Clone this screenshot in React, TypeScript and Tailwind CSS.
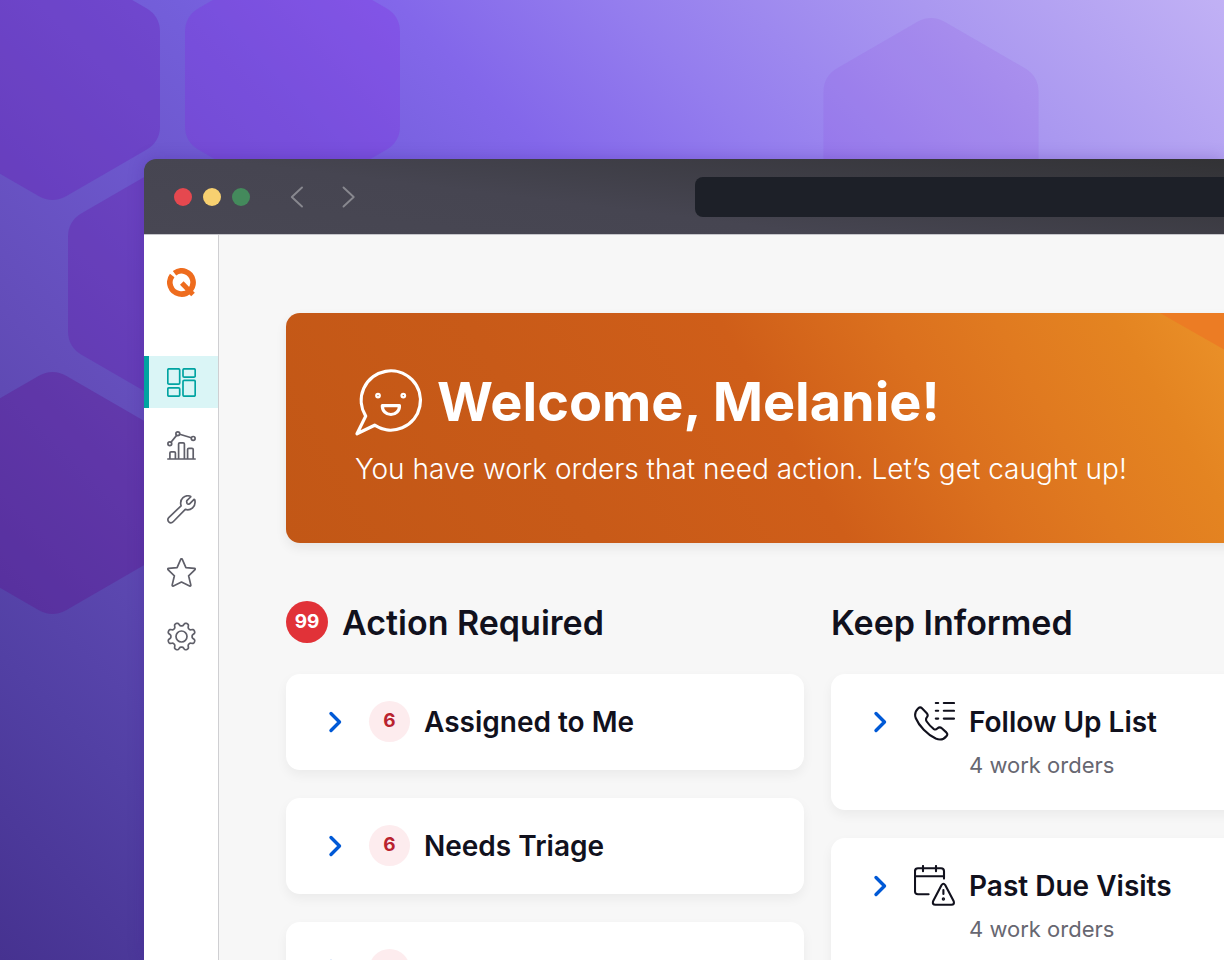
import React from "react";

interface WorkItem {
  id: number,
  title?: string,
  count?: number,
  note?: string,
  icon?: React.ReactNode,
}

// outline of the settings cog, eight soft teeth around (14.5, 14.5)
const cogPath =
  "M" +
  Array.from({ length: 144 }, (_, i) => {
    const a = (i / 144) * Math.PI * 2;
    const r = 12.3 - (1.7 * Math.tanh(1.9 * Math.cos(8 * a))) / Math.tanh(1.9);
    return `${(14.5 + r * Math.cos(a)).toFixed(2)} ${(14.5 + r * Math.sin(a)).toFixed(2)}`;
  }).join("L") +
  "Z";

const hexPath =
  "M-14 -117 Q0 -125 14 -117 L93.5 -71 Q107.5 -63 107.5 -47 V47 Q107.5 63 93.5 71 L14 117 Q0 125 -14 117 L-93.5 71 Q-107.5 63 -107.5 47 V-47 Q-107.5 -63 -93.5 -71Z";

const Backdrop = () => (
  <svg className="absolute inset-0 h-full w-full" aria-hidden="true">
    <path d={hexPath} transform="translate(52.5 79)" fill="#6810b4" fillOpacity="0.28" />
    <path d={hexPath} transform="translate(292.5 79)" fill="#8424e0" fillOpacity="0.26" />
    <path d={hexPath} transform="translate(175.5 284)" fill="#6410a4" fillOpacity="0.28" />
    <path d={hexPath} transform="translate(52.5 493)" fill="#5c0c8c" fillOpacity="0.32" />
    <path d={hexPath} transform="translate(931 139)" fill="#8a2cd8" fillOpacity="0.11" />
  </svg>
);

const Logo = () => (
  <svg width="29" height="29" viewBox="0 0 29 29" fill="none" stroke="#ee6c1e" aria-label="Q" role="img">
    <path d="M7.5 5.2A11.6 11.6 0 1 1 5.2 7.5" strokeWidth="5.6" />
    <path d="M14.8 15L26 26.6" strokeWidth="5" />
  </svg>
);

const DashboardIcon = () => (
  <svg width="29" height="29" viewBox="0 0 29 29" fill="none" stroke="currentColor" strokeWidth="1.7">
    <rect x="0.8" y="0.8" width="11.9" height="15.4" rx="1.2" />
    <rect x="16" y="0.8" width="12.2" height="8.3" rx="1.2" />
    <rect x="0.8" y="19.9" width="11.9" height="8.3" rx="1.2" />
    <rect x="16" y="12.4" width="12.2" height="15.8" rx="1.2" />
  </svg>
);

const ChartIcon = () => (
  <svg width="29" height="29" viewBox="0 0 29 29" fill="none" stroke="currentColor" strokeWidth="1.7" strokeLinecap="round" strokeLinejoin="round">
    <circle cx="2.8" cy="12.8" r="1.9" />
    <circle cx="10.8" cy="2.8" r="1.9" />
    <circle cx="26.2" cy="7.4" r="1.9" />
    <path d="M4 11.2L9.6 4.4M12.7 3.3L24.3 6.8M0.8 28H28.2M2.9 28V22Q2.9 20.8 4.1 20.8H7.2Q8.4 20.8 8.4 22V28M11.6 28V13Q11.6 11.8 12.8 11.8H16.2Q17.4 11.8 17.4 13V28M20.6 28V18.6Q20.6 17.4 21.8 17.4H25Q26.2 17.4 26.2 18.6V28" />
  </svg>
);

const WrenchIcon = () => (
  <svg width="29" height="29" viewBox="0 0 29 29" fill="none" stroke="currentColor" strokeWidth="1.7" strokeLinecap="round" strokeLinejoin="round">
    <path d="M23.6 2L20.1 5.4Q19.5 6 19.7 6.9L20 8.3Q20.3 9.1 21.1 9.1L22.6 8.8L26.8 4.6Q27.5 4.2 27.8 5C28.5 8 27.8 10.8 25.6 12.8C23.5 14.7 20.6 15.2 18.3 14.4L6.4 26.5C4.9 28 3 28 1.8 26.9C0.5 25.6 0.5 23.7 2 22.3L14.1 10.8C13.2 7.8 13.8 4.7 16 2.7C18.2 0.8 21 0.4 23.3 1.2Q24 1.5 23.6 2Z" />
  </svg>
);

const StarIcon = () => (
  <svg width="29" height="29" viewBox="0 0 29 29" fill="none" stroke="currentColor" strokeWidth="1.7" strokeLinejoin="round">
    <path d="M13.7 1.4Q14.5 0 15.3 1.4L18.9 9.6L27.5 10.4Q28.9 10.7 27.8 11.8L21.6 17.8L23.8 26.9Q24 28.5 22.6 27.9L14.5 24L6.4 27.9Q5 28.5 5.2 26.9L7.4 17.8L1.2 11.8Q0.1 10.7 1.5 10.4L10.1 9.6Z" />
  </svg>
);

const SettingsIcon = () => (
  <svg width="29" height="29" viewBox="0 0 29 29" fill="none" stroke="currentColor" strokeWidth="1.7" strokeLinejoin="round">
    <path d={cogPath} />
    <circle cx="14.5" cy="14.5" r="5.5" />
  </svg>
);

const SmileIcon = () => (
  <svg width="68" height="68" viewBox="0 0 68 68" fill="none" stroke="currentColor" strokeWidth="3.2" strokeLinecap="round" strokeLinejoin="round" aria-hidden="true">
    <path d="M10.7 48.1A29.6 29.6 0 1 1 19.6 57.2L2 65.8Z" />
    <circle cx="23" cy="27.6" r="1.8" strokeWidth="2.2" />
    <circle cx="48.3" cy="27.6" r="1.8" strokeWidth="2.2" />
    <path d="M27.3 37.7H44.5C44.5 43 40.6 46.5 35.9 46.5S27.3 43 27.3 37.7Z" />
  </svg>
);

const PhoneListIcon = () => (
  <svg width="41" height="41" viewBox="0 0 41 41" fill="none" stroke="currentColor" strokeWidth="2.1" strokeLinecap="round" strokeLinejoin="round" aria-hidden="true">
    <path d="M8 7.2L12.8 12.2C14.2 13.8 14 15 12.8 16.4C11.6 17.9 11.7 19 12.7 20.5C14.8 23.6 17.3 26.2 19.9 28.1C21.2 28.9 22.1 28.7 23.3 27.6C24.8 26.2 26.3 26 27.8 27.3L32.3 31.4C33.5 32.6 33.6 33.8 32.6 35C29.5 38.9 25.5 39.2 21.7 37.5C13.2 33.4 5 25 1.7 17C0.1 12.6 1.4 10 4.3 7.2C5.5 6.1 6.9 6.1 8 7.2Z" />
    <path d="M21.8 2H24.2M29.8 2H40M21.8 9.8H24.2M29.8 9.8H40M21.8 17.6H24.2M29.8 17.6H40" />
  </svg>
);

const CalendarAlertIcon = () => (
  <svg width="41" height="41" viewBox="0 0 41 41" fill="none" stroke="currentColor" strokeWidth="2.1" strokeLinecap="round" strokeLinejoin="round" aria-hidden="true">
    <path d="M14.6 29.2H4Q1 29.2 1 26.2V6.2Q1 3.2 4 3.2H27Q30 3.2 30 6.2V13.6M1 11.2H30M9 1V6.2M22 1V6.2" />
    <path d="M27.6 20Q29.4 17.4 31.2 20L39.6 36Q40.8 39.8 37.4 39.8H21.4Q18 39.8 19.2 36ZM29.4 25V29" />
    <circle cx="29.4" cy="34" r="1" strokeWidth="1.4" />
  </svg>
);

const Chevron = () => (
  <svg className="shrink-0" width="14" height="22" viewBox="0 0 14 22" fill="none" stroke="#0059d6" strokeWidth="3.4" strokeLinecap="round" strokeLinejoin="round" aria-hidden="true">
    <path d="M3 2.5L11.5 11L3 19.5" />
  </svg>
);

const navItems = [
  { name: "Dashboard", icon: <DashboardIcon />, active: true },
  { name: "Reports", icon: <ChartIcon />, active: false },
  { name: "Maintenance", icon: <WrenchIcon />, active: false },
  { name: "Favorites", icon: <StarIcon />, active: false },
  { name: "Settings", icon: <SettingsIcon />, active: false },
];

const actionItems: WorkItem[] = [
  { id: 1, title: "Assigned to Me", count: 6 },
  { id: 2, title: "Needs Triage", count: 6 },
  { id: 3 },
];

const informedItems: WorkItem[] = [
  { id: 1, title: "Follow Up List", note: "4 work orders", icon: <PhoneListIcon /> },
  { id: 2, title: "Past Due Visits", note: "4 work orders", icon: <CalendarAlertIcon /> },
];

const TitleBar = () => (
  <header className="flex h-[76px] shrink-0 items-center border-b border-[#c6c6cb] bg-[linear-gradient(7deg,#484753_0%,#464551_40%,#323235_100%)] pl-[30px]">
    <div className="flex gap-[11px]">
      <button aria-label="Close" className="size-[18px] rounded-full bg-[#e5484f]" />
      <button aria-label="Minimize" className="size-[18px] rounded-full bg-[#f7d070]" />
      <button aria-label="Maximize" className="size-[18px] rounded-full bg-[#448a5c]" />
    </div>
    <div className="ml-10 flex gap-[38px] text-[#88888f]">
      <button aria-label="Back">
        <svg width="14" height="22" viewBox="0 0 14 22" fill="none" stroke="currentColor" strokeWidth="1.9" strokeLinecap="round" strokeLinejoin="round">
          <path d="M12 1.5L1.8 11L12 20.5" />
        </svg>
      </button>
      <button aria-label="Forward">
        <svg width="14" height="22" viewBox="0 0 14 22" fill="none" stroke="currentColor" strokeWidth="1.9" strokeLinecap="round" strokeLinejoin="round">
          <path d="M1.5 1.5L11.7 11L1.5 20.5" />
        </svg>
      </button>
    </div>
    <input
      aria-label="Address"
      className="-mr-4 ml-[339px] h-10 min-w-0 flex-1 rounded-lg bg-[#1d2028] px-4 text-white outline-none"
    />
  </header>
);

const SideNav = () => (
  <nav className="flex w-[75px] shrink-0 flex-col border-r border-[#cfcfd2] bg-white pt-[33px]">
    <a href="#home" className="flex justify-center pl-px">
      <Logo />
    </a>
    <ul className="mt-[59px] flex h-[306px] flex-col justify-between">
      {navItems.map((item) => (
        <li key={item.name}>
          <a
            href="#nav"
            aria-label={item.name}
            className={
              item.active
                ? "flex h-[52px] items-center justify-center border-l-[5px] border-[#00a3a1] bg-[#daf5f6] pr-[5px] text-[#00a3a1]"
                : "flex h-[52px] items-center justify-center text-[#5f5f69]"
            }
          >
            {item.icon}
          </a>
        </li>
      ))}
    </ul>
  </nav>
);

const WorkCard: React.FC<{ item: WorkItem }> = ({ item }) => (
  <li className="rounded-[14px] bg-white px-[42px] pb-7 pt-[27px] shadow-[0_5px_12px_rgba(0,0,0,0.05)]">
    <button className="flex h-[41px] w-full items-center text-left">
      <Chevron />
      <span className="ml-[27px] flex w-[41px] shrink-0 justify-center text-[#11111d]">
        {item.icon ?? (
          <span className="flex size-[41px] items-center justify-center rounded-full bg-[#fdecee] text-[19px] font-bold text-[#b9232f]">
            {item.count}
          </span>
        )}
      </span>
      <span className="ml-3.5 text-[28px] font-semibold text-[#11111d]">{item.title}</span>
    </button>
    {item.note && <p className="ml-24 mt-1.5 text-[22px] leading-[34px] text-[#676771]">{item.note}</p>}
  </li>
);

const App = () => {
  return (
    <div className="relative flex h-screen overflow-hidden bg-[linear-gradient(45deg,#463290_0%,#5240a4_14%,#634db9_30%,#745fdb_52%,#8367ea_62%,#947dee_72%,#aa98f0_86%,#c1b1f5_100%)] pl-36 pt-[159px] font-[Inter,sans-serif]">
      <Backdrop />
      <div className="relative flex min-w-0 flex-1 flex-col rounded-tl-xl shadow-[0_0_16px_rgba(60,20,140,0.25)]">
        <div className="flex min-h-0 flex-1 flex-col overflow-hidden rounded-tl-xl">
          <TitleBar />
          <div className="flex min-h-0 flex-1">
            <SideNav />
            <main className="min-w-0 flex-1 overflow-hidden bg-[#f7f7f7] pl-[67px] pt-[78px]">
              {/* the dashboard runs on past the right edge of the window */}
              <div className="-mr-[125px]">
                <section className="relative h-[230px] overflow-hidden rounded-[14px] bg-[linear-gradient(60deg,#c25716_0%,#c85a18_26%,#cf5e19_47%,#db701e_61%,#e07a20_70%,#e48421_80%,#eb9229_90%)] px-[69px] pt-[54px] text-white shadow-[0_5px_12px_rgba(0,0,0,0.07)]">
                  <svg className="absolute right-0 top-0" width="189" height="108" viewBox="0 0 189 108" aria-hidden="true">
                    <path d="M0 0H189V108Z" fill="#ec7c24" />
                  </svg>
                  <div className="flex items-center gap-[14px]">
                    <SmileIcon />
                    <h1 className="text-[54px] font-bold leading-[70px]">Welcome, Melanie!</h1>
                  </div>
                  <p className="mt-3.5 text-[28px] font-light leading-9">
                    You have work orders that need action. Let’s get caught up!
                  </p>
                </section>

                <div className="mt-[58px] grid grid-cols-2 gap-[27px]">
                  <section>
                    <div className="flex h-[42px] items-center gap-3.5">
                      <span className="flex size-[42px] items-center justify-center rounded-full bg-[#e13238] text-[19px] font-bold text-white">
                        99
                      </span>
                      <h2 className="text-[34px] font-semibold text-[#11111d]">Action Required</h2>
                    </div>
                    <ul className="mt-[31px] flex flex-col gap-7">
                      {actionItems.map((item) => (
                        <WorkCard key={item.id} item={item} />
                      ))}
                    </ul>
                  </section>
                  <section>
                    <div className="flex h-[42px] items-center">
                      <h2 className="text-[34px] font-semibold text-[#11111d]">Keep Informed</h2>
                    </div>
                    <ul className="mt-[31px] flex flex-col gap-7">
                      {informedItems.map((item) => (
                        <WorkCard key={item.id} item={item} />
                      ))}
                    </ul>
                  </section>
                </div>
              </div>
            </main>
          </div>
        </div>
      </div>
    </div>
  );
};

export default App;
